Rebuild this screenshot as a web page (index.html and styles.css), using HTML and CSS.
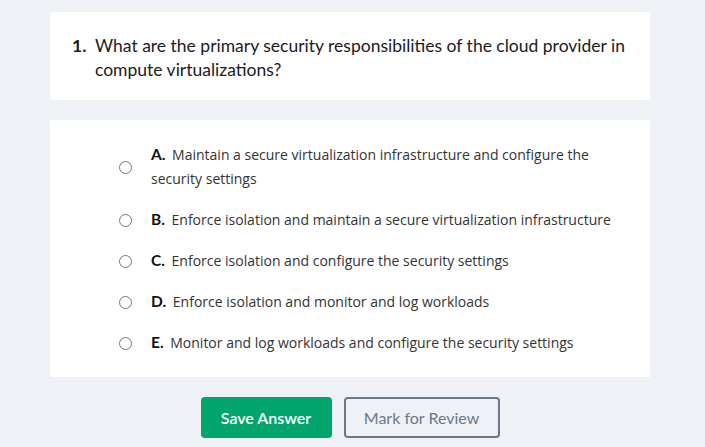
FILE: index.html
```html
<!DOCTYPE html>
<html lang="en">
<head>
    <meta charset="UTF-8">
    <meta name="viewport" content="width=device-width, initial-scale=1.0">
    <title>Quiz</title>
    <link rel="stylesheet" href="styles.css">
</head>
<body>
    <div class="quiz-wrap">
        <div class="question-card">
            <span class="q-num">1.</span>
            <p class="q-text">What are the primary security responsibilities of the cloud provider in compute virtualizations?</p>
        </div>

        <div class="options-card">
            <label class="option">
                <input type="radio" name="q1" value="a">
                <span class="opt-text"><b>A.</b> Maintain a secure virtualization infrastructure and configure the security settings</span>
            </label>
            <label class="option">
                <input type="radio" name="q1" value="b">
                <span class="opt-text"><b>B.</b> Enforce isolation and maintain a secure virtualization infrastructure</span>
            </label>
            <label class="option">
                <input type="radio" name="q1" value="c">
                <span class="opt-text"><b>C.</b> Enforce isolation and configure the security settings</span>
            </label>
            <label class="option">
                <input type="radio" name="q1" value="d">
                <span class="opt-text"><b>D.</b> Enforce isolation and monitor and log workloads</span>
            </label>
            <label class="option">
                <input type="radio" name="q1" value="e">
                <span class="opt-text"><b>E.</b> Monitor and log workloads and configure the security settings</span>
            </label>
        </div>

        <div class="actions">
            <button class="btn btn-save">Save Answer</button>
            <button class="btn btn-review">Mark for Review</button>
        </div>
    </div>
</body>
</html>
```

FILE: styles.css
```css
body {
    margin: 0;
    background-color: #eef2f6;
    font-family: Lato, "Open Sans", sans-serif;
    color: #1b1b1b;
}
.quiz-wrap {
    width: 600px;
    margin-left: 50px;
    padding-top: 12px;
}
.question-card {
    background: white;
    display: flex;
    padding: 22px 18px 18px 22px;
}
.q-num {
    font-size: 17.5px;
    line-height: 24px;
    font-weight: bold;
    width: 23px;
    flex-shrink: 0;
}
.q-text {
    margin: 0;
    font-size: 17.5px;
    line-height: 24px;
}
.options-card {
    background: white;
    margin-top: 20px;
    padding: 23px 28px 22px 69px;
    display: flex;
    flex-direction: column;
    gap: 17px;
}
.option {
    display: flex;
    align-items: center;
    cursor: pointer;
}
.option input {
    margin: 0 19px 0 0;
    width: 13px;
    height: 13px;
    flex-shrink: 0;
}
.opt-text {
    font-family: "Open Sans", sans-serif;
    font-size: 14px;
    line-height: 24px;
    color: #333;
}
.opt-text b {
    font-family: Lato, sans-serif;
    font-size: 15.5px;
    line-height: 1;
    color: #111;
    margin-right: 3px;
}
.actions {
    display: flex;
    justify-content: center;
    gap: 12px;
    margin-top: 20px;
}
.btn {
    font-family: Lato, sans-serif;
    font-size: 16px;
    height: 41px;
    border-radius: 4px;
    cursor: pointer;
}
.btn-save {
    width: 131px;
    background: #02a46e;
    color: white;
    border: none;
    font-weight: 600;
}
.btn-review {
    width: 156px;
    background: transparent;
    color: #6b7887;
    border: 2px solid #6b7887;
}
```
